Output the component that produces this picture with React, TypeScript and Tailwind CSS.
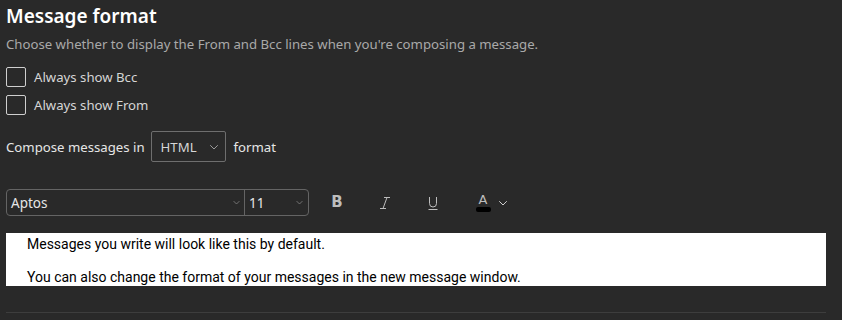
import React from "react";

const Chevron = ({ className = "" }: { className?: string }) => (
  <svg viewBox="0 0 12 12" className={className} fill="none" stroke="currentColor" strokeWidth="1" strokeLinecap="round" strokeLinejoin="round">
    <path d="M2.5 4.5 L6 8 L9.5 4.5" />
  </svg>
);

export default function App() {
  return (
    <div
      className="w-[842px] h-[320px] bg-[#292929] px-[6px] pt-[2px] overflow-hidden"
      style={{ fontFamily: '"Noto Sans", "Open Sans", sans-serif' }}
    >
      <div className="w-[820px]">
        <div className="text-[19px] leading-[28px] font-semibold text-white">Message format</div>
        <div className="mt-[4px] text-[13.2px] leading-[20px] text-[#a9a9a9]">
          Choose whether to display the From and Bcc lines when you're composing a message.
        </div>

        <div className="mt-[9px] flex flex-col">
          <label className="h-[28px] flex items-center gap-[8px]">
            <span className="w-[20px] h-[20px] border border-[#cfcfcf] rounded-[2px]" />
            <span className="text-[13.2px] text-[#d6d6d6] pt-[1px]">Always show Bcc</span>
          </label>
          <label className="h-[28px] flex items-center gap-[8px]">
            <span className="w-[20px] h-[20px] border border-[#cfcfcf] rounded-[2px]" />
            <span className="text-[13.2px] text-[#d6d6d6] pt-[1px]">Always show From</span>
          </label>
        </div>

        <div className="mt-[12px] flex items-center h-[31px]">
          <span className="text-[13.2px] text-[#e6e6e6] pt-[2px]">Compose messages in</span>
          <div className="ml-[6px] w-[75px] h-[31px] border border-[#6e6e6e] rounded-[2px] flex items-center pl-[9px]">
            <span className="text-[13.2px] text-[#d6d6d6] pt-[2px]">HTML</span>
            <Chevron className="ml-[11px] w-[12px] h-[12px] text-[#9a9a9a]" />
          </div>
          <span className="ml-[8px] text-[13.2px] text-[#e6e6e6] pt-[2px]">format</span>
        </div>

        <div className="mt-[27px] flex items-center h-[27px]">
          <div className="w-[303px] h-[27px] border border-[#646464] rounded-[4px] flex">
            <div className="w-[238px] flex items-center pl-[4px] pr-[3px] border-r border-[#646464]">
              <span className="flex-1 text-[13.5px] text-[#e6e6e6] pt-[1px]">Aptos</span>
              <Chevron className="w-[9px] h-[9px] text-[#8a8a8a]" />
            </div>
            <div className="flex-1 flex items-center pl-[4px] pr-[4px]">
              <span className="flex-1 text-[13.5px] text-[#e6e6e6] pt-[1px]">11</span>
              <Chevron className="w-[9px] h-[9px] text-[#8a8a8a]" />
            </div>
          </div>
          <div className="ml-[22px] w-[12px] flex justify-center text-[15px] font-bold text-[#bdbdbd]" style={{ fontFamily: '"DejaVu Sans", sans-serif' }}>B</div>
          <svg viewBox="0 0 12 14" className="ml-[36px] w-[12px] h-[14px] text-[#bdbdbd]" fill="none" stroke="currentColor" strokeWidth="1">
            <path d="M5 1.5 H11 M1 12.5 H7 M8 1.5 L4 12.5" />
          </svg>
          <svg viewBox="0 0 12 14" className="ml-[36px] w-[12px] h-[14px] text-[#bdbdbd]" fill="none" stroke="currentColor" strokeWidth="1">
            <path d="M2.5 1 V7.5 A3.5 3.5 0 0 0 9.5 7.5 V1 M1.5 13.5 H10.5" />
          </svg>
          <div className="ml-[36px] w-[16px] h-[20px] flex flex-col items-center">
            <span className="text-[13px] leading-[13px] text-[#bdbdbd]" style={{ fontFamily: '"DejaVu Sans", sans-serif' }}>A</span>
            <span className="mt-[1px] w-[15px] h-[5px] rounded-[2px] bg-black" />
          </div>
          <Chevron className="ml-[6px] w-[12px] h-[12px] text-[#d0d0d0]" />
        </div>

        <div className="mt-[17px] h-[53px] bg-white pl-[21px] pt-[1px] text-black text-[14px] leading-[20px]" style={{ fontFamily: '"Roboto", sans-serif' }}>
          <div>Messages you write will look like this by default.</div>
          <div className="mt-[13px]">You can also change the format of your messages in the new message window.</div>
        </div>

        <div className="mt-[26px] h-px bg-[#3d3d3d]" />
      </div>
    </div>
  );
}
